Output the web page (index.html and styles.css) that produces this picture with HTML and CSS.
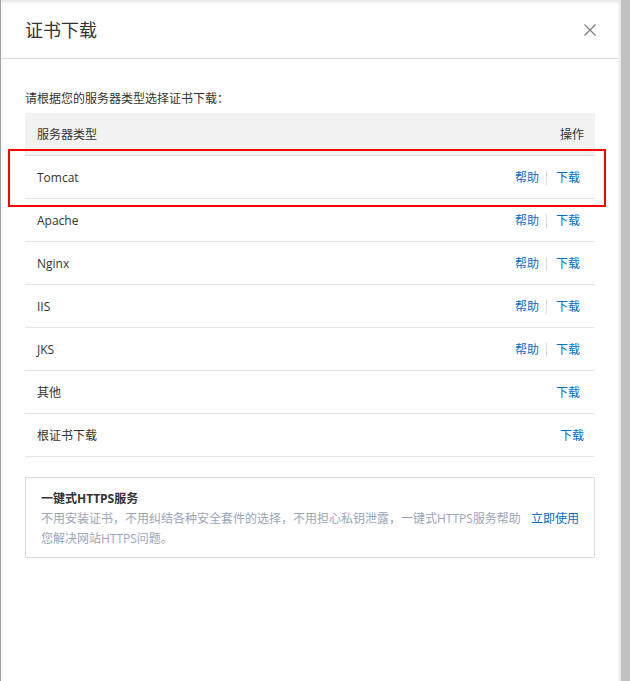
FILE: index.html
```html
<!DOCTYPE html>
<html lang="zh-CN">
<head>
<meta charset="utf-8">
<title>证书下载</title>
<link rel="stylesheet" href="styles.css">
</head>
<body>
<div class="page">
  <div class="dialog">
    <div class="dialog-header">
      <h1 class="dialog-title">证书下载</h1>
      <span class="close" aria-label="关闭">
        <svg width="12" height="12" viewBox="0 0 12 12"><path d="M0.5 0.5L11.5 11.5M11.5 0.5L0.5 11.5" stroke="#777" stroke-width="1.1" fill="none"/></svg>
      </span>
    </div>
    <div class="dialog-body">
      <p class="intro">请根据您的服务器类型选择证书下载：</p>
      <div class="table">
        <div class="row head">
          <span class="cell-name">服务器类型</span>
          <span class="cell-ops wide">操作</span>
        </div>
        <div class="row">
          <span class="cell-name">Tomcat</span>
          <span class="cell-ops"><a class="link">帮助</a><i class="sep"></i><a class="link">下载</a></span>
        </div>
        <div class="row">
          <span class="cell-name">Apache</span>
          <span class="cell-ops"><a class="link">帮助</a><i class="sep"></i><a class="link">下载</a></span>
        </div>
        <div class="row">
          <span class="cell-name">Nginx</span>
          <span class="cell-ops"><a class="link">帮助</a><i class="sep"></i><a class="link">下载</a></span>
        </div>
        <div class="row">
          <span class="cell-name">IIS</span>
          <span class="cell-ops"><a class="link">帮助</a><i class="sep"></i><a class="link">下载</a></span>
        </div>
        <div class="row">
          <span class="cell-name">JKS</span>
          <span class="cell-ops"><a class="link">帮助</a><i class="sep"></i><a class="link">下载</a></span>
        </div>
        <div class="row">
          <span class="cell-name">其他</span>
          <span class="cell-ops"><a class="link">下载</a></span>
        </div>
        <div class="row">
          <span class="cell-name">根证书下载</span>
          <span class="cell-ops wide"><a class="link">下载</a></span>
        </div>
      </div>
      <div class="promo">
        <div class="promo-text">
          <div class="promo-title">一键式HTTPS服务</div>
          <div class="promo-desc">不用安装证书，不用纠结各种安全套件的选择，不用担心私钥泄露，一键式HTTPS服务帮助您解决网站HTTPS问题。</div>
        </div>
        <a class="link promo-link">立即使用</a>
      </div>
    </div>
  </div>
  <div class="gutter"></div>
  <div class="scrollbar"></div>
  <div class="highlight"></div>
</div>
</body>
</html>
```

FILE: styles.css
```css
* { box-sizing: border-box; }
html, body { margin: 0; padding: 0; }
body {
  font-family: "Open Sans", "Noto Sans CJK SC", sans-serif;
  font-size: 12px;
  color: #333;
  background: #fff;
}
.page {
  position: relative;
  display: flex;
  width: 630px;
  height: 681px;
  overflow: hidden;
}
.dialog {
  width: 619px;
  flex: none;
  border-left: 1px solid #a3a3a3;
  background: #fff;
  box-shadow: inset 0 3px 3px -1px rgba(0,0,0,0.10);
}
.gutter { width: 2px; flex: none; background: #ebebeb; }
.scrollbar { flex: 1; background: #c1c1c1; }

.dialog-header {
  height: 59px;
  border-bottom: 1px solid #dcdcdc;
  display: flex;
  align-items: center;
  justify-content: space-between;
  padding: 1px 23px 0 24px;
}
.dialog-title {
  margin: 0;
  font-size: 18px;
  font-weight: normal;
  color: #333;
  line-height: 24px;
}
.close { display: flex; width: 12px; height: 12px; }

.dialog-body { padding: 30px 23px 0 24px; }
.intro { margin: 0 0 4px; line-height: 20px; color: #333; }

.table { width: 570px; }
.row {
  display: flex;
  align-items: center;
  justify-content: space-between;
  height: 43px;
  border-bottom: 1px solid #e4e4e4;
  padding: 2px 15px 0 12px;
  line-height: 20px;
}
.row.head {
  height: 43px;
  background: #f2f2f2;
  border-bottom: 1px solid #dedede;
}
.cell-ops { display: flex; align-items: center; }
.cell-ops.wide { margin-right: -4px; }
.link { color: #0070cc; text-decoration: none; cursor: pointer; }
.sep {
  display: inline-block;
  width: 1px;
  height: 14px;
  background: #dcdcdc;
  margin: 0 9px 0 7px;
}

.promo {
  margin-top: 20px;
  width: 570px;
  border: 1px solid #dcdcdc;
  padding: 11px 15px 8px 15px;
  display: flex;
  align-items: flex-start;
  gap: 6px;
  line-height: 20px;
}
.promo-text { flex: 1; }
.promo-title { font-weight: bold; color: #333; }
.promo-desc { color: #9aa5b8; }
.promo-link { flex: none; margin-top: 20px; }

.highlight {
  position: absolute;
  left: 8px;
  top: 149px;
  width: 598px;
  height: 58px;
  border: 2px solid #f00;
  pointer-events: none;
}
```
